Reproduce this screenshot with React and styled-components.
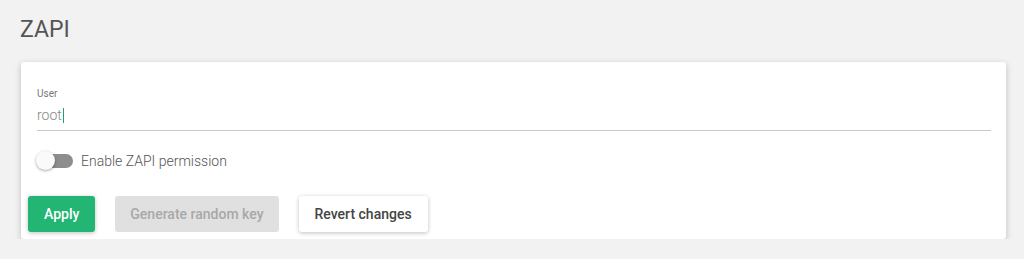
import React from "react"
import styled, { createGlobalStyle } from "styled-components"

const Global = createGlobalStyle`
  body {
    margin: 0;
    background: #f2f2f2;
    font-family: Roboto, "Liberation Sans", sans-serif;
  }
`;

const Page = styled.div`
  padding: 16px 18px 0 21px;
`;

const Title = styled.h1`
  margin: 0 0 19px -1px;
  font-size: 23px;
  font-weight: 400;
  color: #555;
  line-height: 27px;
`;

const Card = styled.div`
  background: #fff;
  border-radius: 3px;
  box-shadow: 0 2px 6px rgba(0, 0, 0, 0.22);
  padding: 25px 15px 7px 16px;
`;

const Field = styled.div`
  display: flex;
  flex-direction: column;
  border-bottom: 1px solid #c5cad0;
`;

const Label = styled.label`
  font-size: 10px;
  color: #777;
  line-height: 14px;
  margin-bottom: 3px;
`;

const Value = styled.div`
  font-size: 14px;
  font-weight: 300;
  color: #888;
  line-height: 20px;
  padding: 1px 0 5px;
  display: flex;
  align-items: center;
`;

const Caret = styled.span`
  width: 1px;
  height: 15px;
  background: #1aa56b;
  margin-left: 1px;
`;

const ToggleRow = styled.div`
  display: flex;
  align-items: center;
  gap: 8px;
  margin-top: 22px;
  font-size: 14px;
  font-weight: 300;
  color: #555;
`;

const Switch = styled.div`
  position: relative;
  width: 36px;
  height: 14px;
  border-radius: 7px;
  background: #8d8d8d;
`;

const Thumb = styled.div`
  position: absolute;
  left: -1px;
  top: -3px;
  width: 19px;
  height: 19px;
  border-radius: 50%;
  background: #fafafa;
  box-shadow: 0 1px 3px rgba(0, 0, 0, 0.35);
`;

const Actions = styled.div`
  display: flex;
  gap: 20px;
  margin: 27px 0 0 -9px;
`;

const Button = styled.button`
  height: 36px;
  padding: 0 ${p => (p.variant === "disabled" ? 15 : 16)}px;
  border: none;
  border-radius: 3px;
  font-family: inherit;
  font-size: 14px;
  font-weight: 500;
  background: ${p => (p.variant === "primary" ? "#22b573" : p.variant === "disabled" ? "#e0e0e0" : "#fff")};
  color: ${p => (p.variant === "primary" ? "#fff" : p.variant === "disabled" ? "#a8a8a8" : "#444")};
  box-shadow: ${p => (p.variant === "disabled" ? "none" : "0 1px 4px rgba(0,0,0,0.25)")};
`;

const App = () => {
  return (
    <Page>
      <Global />
      <Title>ZAPI</Title>
      <Card>
        <Field>
          <Label>User</Label>
          <Value>root<Caret /></Value>
        </Field>
        <ToggleRow>
          <Switch>
            <Thumb />
          </Switch>
          Enable ZAPI permission
        </ToggleRow>
        <Actions>
          <Button variant="primary">Apply</Button>
          <Button variant="disabled">Generate random key</Button>
          <Button>Revert changes</Button>
        </Actions>
      </Card>
    </Page>
  )
}

export default App
